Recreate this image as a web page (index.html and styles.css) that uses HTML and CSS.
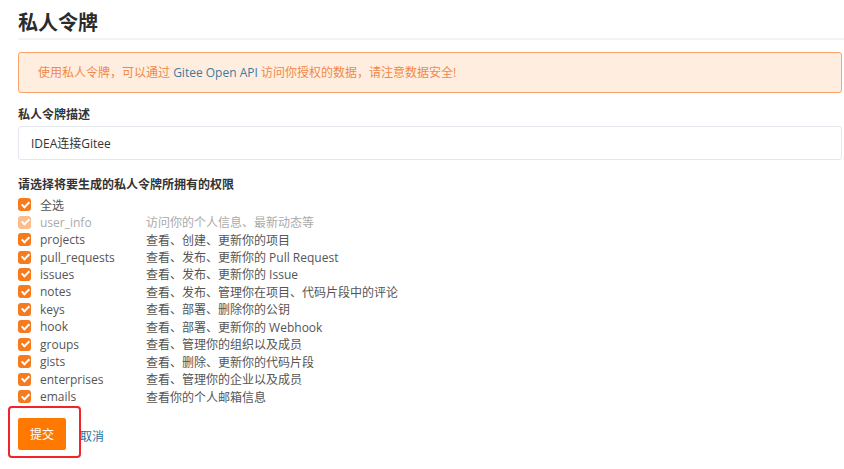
FILE: index.html
```html
<!DOCTYPE html>
<html lang="zh-CN">
<head>
    <meta charset="UTF-8">
    <meta name="viewport" content="width=device-width, initial-scale=1.0">
    <title>私人令牌</title>
    <link rel="stylesheet" href="styles.css">
</head>
<body>
    <div class="page">
        <h1 class="page-title">私人令牌</h1>
        <div class="divider"></div>

        <div class="alert">
            使用私人令牌，可以通过 <span class="alert-link">Gitee Open API</span> 访问你授权的数据，请注意数据安全!
        </div>

        <div class="field">
            <label class="field-label" for="tokenDesc">私人令牌描述</label>
            <input class="field-input" type="text" id="tokenDesc" value="IDEA连接Gitee">
        </div>

        <div class="field scopes">
            <div class="field-label">请选择将要生成的私人令牌所拥有的权限</div>
            <ul class="scope-list">
                <li class="scope"><span class="check"></span><span class="scope-name">全选</span></li>
                <li class="scope disabled"><span class="check"></span><span class="scope-name">user_info</span><span class="scope-desc">访问你的个人信息、最新动态等</span></li>
                <li class="scope"><span class="check"></span><span class="scope-name">projects</span><span class="scope-desc">查看、创建、更新你的项目</span></li>
                <li class="scope"><span class="check"></span><span class="scope-name">pull_requests</span><span class="scope-desc">查看、发布、更新你的 Pull Request</span></li>
                <li class="scope"><span class="check"></span><span class="scope-name">issues</span><span class="scope-desc">查看、发布、更新你的 Issue</span></li>
                <li class="scope"><span class="check"></span><span class="scope-name">notes</span><span class="scope-desc">查看、发布、管理你在项目、代码片段中的评论</span></li>
                <li class="scope"><span class="check"></span><span class="scope-name">keys</span><span class="scope-desc">查看、部署、删除你的公钥</span></li>
                <li class="scope"><span class="check"></span><span class="scope-name">hook</span><span class="scope-desc">查看、部署、更新你的 Webhook</span></li>
                <li class="scope"><span class="check"></span><span class="scope-name">groups</span><span class="scope-desc">查看、管理你的组织以及成员</span></li>
                <li class="scope"><span class="check"></span><span class="scope-name">gists</span><span class="scope-desc">查看、删除、更新你的代码片段</span></li>
                <li class="scope"><span class="check"></span><span class="scope-name">enterprises</span><span class="scope-desc">查看、管理你的企业以及成员</span></li>
                <li class="scope"><span class="check"></span><span class="scope-name">emails</span><span class="scope-desc">查看你的个人邮箱信息</span></li>
            </ul>
        </div>

        <div class="actions">
            <button class="btn-submit" type="button">提交</button>
            <a class="btn-cancel" href="#">取消</a>
            <span class="highlight"></span>
        </div>
    </div>
</body>
</html>
```

FILE: styles.css
```css
body {
    margin: 0;
    background-color: #fff;
    font-family: "Open Sans", "Noto Sans CJK SC", sans-serif;
    font-size: 12px;
    color: #333;
}

.page {
    min-height: 469px;
    padding: 0 2px 0 18px;
    box-sizing: border-box;
}

.page-title {
    margin: 9px 0 0;
    font-size: 20px;
    line-height: 28px;
    font-weight: 700;
    color: #2b2b2b;
}

.divider {
    height: 2px;
    margin: 1px -2px 0 0;
    background-color: #f3f3f4;
}

.alert {
    margin-top: 12px;
    padding: 11px 19px;
    line-height: 17px;
    background-color: #ffeee0;
    border: 1px solid #f9a26a;
    border-radius: 3px;
    color: #f0884a;
}

.alert-link {
    color: #3f7a9c;
}

.field {
    margin-top: 13px;
}

.field-label {
    display: block;
    line-height: 17px;
    font-weight: 700;
    color: #333;
}

.field-input {
    display: block;
    width: 100%;
    height: 34px;
    margin-top: 3px;
    padding: 0 12px;
    box-sizing: border-box;
    border: 1px solid #e3e6ec;
    border-radius: 3px;
    font-family: inherit;
    font-size: 12px;
    color: #333;
    outline: none;
}

.scopes {
    margin-top: 16px;
}

.scope-list {
    list-style: none;
    margin: 3px 0 0;
    padding: 0;
}

.scope {
    display: flex;
    align-items: center;
    height: 17.45px;
    color: #555;
}

.check {
    position: relative;
    width: 13px;
    height: 13px;
    margin-right: 9px;
    border-radius: 3px;
    background-color: #f57b1e;
    flex-shrink: 0;
}

.check::after {
    content: "";
    position: absolute;
    left: 4.5px;
    top: 1.5px;
    width: 3px;
    height: 6px;
    border: solid #fff;
    border-width: 0 2px 2px 0;
    transform: rotate(45deg);
}

.scope-name {
    width: 106px;
    flex-shrink: 0;
}

.scope.disabled {
    color: #aaa;
}

.scope.disabled .check {
    background-color: #fbbd8b;
}

.actions {
    position: relative;
    display: flex;
    align-items: center;
    gap: 14px;
    margin-top: 13px;
}

.btn-submit {
    width: 48px;
    height: 32px;
    padding: 0;
    border: none;
    border-radius: 2px;
    background-color: #ff7800;
    color: #fff;
    font-family: inherit;
    font-size: 12px;
}

.btn-cancel {
    margin-top: 3px;
    color: #2a6e9c;
    text-decoration: none;
    font-size: 12px;
}

.highlight {
    position: absolute;
    left: -10px;
    top: -12px;
    width: 69px;
    height: 48px;
    border: 2px solid #f2232a;
    border-radius: 4px;
}
```
